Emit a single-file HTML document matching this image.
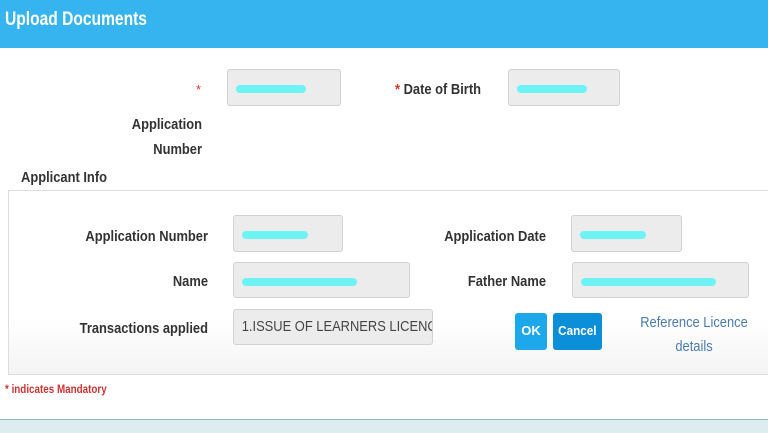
<html><head><style>
body{margin:0;width:768px;height:432px;overflow:hidden;background:#fff;font-family:"Liberation Sans",sans-serif;position:relative}
.a{position:absolute}
.hdr{left:0;top:0;width:768px;height:48px;background:#35b4f0}
.ht{left:5px;top:9px;color:#fff;font-weight:bold;font-size:19px;transform:scaleX(0.82);transform-origin:left;white-space:nowrap}
.lbl{font-size:15px;color:#333;font-weight:bold;transform:scaleX(0.86);transform-origin:right;white-space:nowrap}
.inp{background:#ececec;border:1px solid #d2d2d2;border-radius:3px;box-sizing:border-box;font-size:13px;color:#555}
.blur{position:absolute;height:8px;background:#6ef3f5;border-radius:4px;top:15px}
.btn{color:#fff;font-weight:bold;font-size:13px;text-align:center;border-radius:3px;line-height:36px}
</style></head><body>
<div class="a hdr"></div><div class="a ht">Upload Documents</div>
<div class="a" style="left:196px;top:82px;color:#d33;font-size:13px">*</div>
<div class="a lbl" style="left:100px;top:112px;width:102px;text-align:right;line-height:25px">Application<br>Number</div>
<div class="a inp" style="left:227px;top:69px;width:114px;height:37px"><div class="blur" style="left:8px;width:70px"></div></div>
<div class="a lbl" style="left:380px;top:81px;width:101px;text-align:right"><span style="color:#d33">*</span> Date of Birth</div>
<div class="a inp" style="left:508px;top:69px;width:112px;height:37px"><div class="blur" style="left:8px;width:70px"></div></div>
<div class="a lbl" style="left:21px;top:169px;transform-origin:left">Applicant Info</div>
<div class="a" style="left:8px;top:190px;width:770px;height:185px;border:1px solid #ddd;box-sizing:border-box;background:linear-gradient(#fff 70%,#f4f4f4)"></div>
<div class="a lbl" style="left:40px;top:228px;width:168px;text-align:right">Application Number</div>
<div class="a inp" style="left:233px;top:215px;width:110px;height:37px"><div class="blur" style="left:8px;width:66px"></div></div>
<div class="a lbl" style="left:420px;top:228px;width:126px;text-align:right">Application Date</div>
<div class="a inp" style="left:571px;top:215px;width:111px;height:37px"><div class="blur" style="left:8px;width:66px"></div></div>
<div class="a lbl" style="left:40px;top:273px;width:168px;text-align:right">Name</div>
<div class="a inp" style="left:233px;top:262px;width:177px;height:36px"><div class="blur" style="left:8px;width:115px"></div></div>
<div class="a lbl" style="left:420px;top:273px;width:126px;text-align:right">Father Name</div>
<div class="a inp" style="left:572px;top:262px;width:177px;height:36px"><div class="blur" style="left:8px;width:135px"></div></div>
<div class="a lbl" style="left:40px;top:320px;width:168px;text-align:right">Transactions applied</div>
<div class="a inp" style="left:233px;top:309px;width:200px;height:36px;overflow:hidden"><div style="font-size:15px;line-height:34px;padding-left:9px;white-space:nowrap;color:#444;transform:scaleX(0.86);transform-origin:left">1.ISSUE OF LEARNERS LICENCE</div></div>
<div class="a btn" style="left:515px;top:313px;width:32px;height:37px;background:#1ea8ec">OK</div>
<div class="a btn" style="left:553px;top:313px;width:49px;height:37px;background:#0c8fd9"><span style="display:inline-block;transform:scaleX(0.9)">Cancel</span></div>
<div class="a" style="left:614px;top:311px;width:160px;text-align:center;color:#4a7cac;font-size:15px;line-height:24px;transform:scaleX(0.86)">Reference Licence<br>details</div>
<div class="a" style="left:5px;top:382px;color:#c33;font-size:12px;font-weight:bold;transform:scaleX(0.82);transform-origin:left;white-space:nowrap">* indicates Mandatory</div>
<div class="a" style="left:0;top:419px;width:768px;height:13px;background:#dcecef;border-top:1px solid #8fb5c6"></div>
</body></html>
